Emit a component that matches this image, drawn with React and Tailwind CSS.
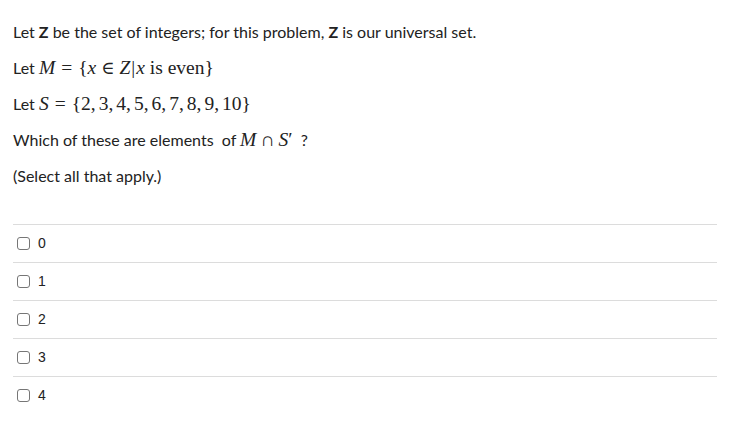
import React from "react";

const SERIF = '"Liberation Serif", "Times New Roman", serif';
const V = ({ children }) => <span className="italic">{children}</span>;
const Op = ({ children }) => <span className="mx-[6px]">{children}</span>;
const Bin = ({ children }) => <span className="mx-[4px]">{children}</span>;

const Math = ({ children }) => (
  <span className="text-[19.5px]" style={{ fontFamily: SERIF }}>{children}</span>
);

export default function App() {
  const opts = ["0", "1", "2", "3", "4"];
  const nums = ["2", "3", "4", "5", "6", "7", "8", "9", "10"];
  return (
    <div className="w-[731px] h-[428px] bg-white pl-[13px] pr-[14px] pt-[20px]" style={{ fontFamily: 'Lato, "Liberation Sans", sans-serif' }}>
      <div className="text-[16px] text-[#222]">
        <p className="h-[24px] leading-[24px]">Let <b>Z</b> be the set of integers; for this problem, <b>Z</b> is our universal set.</p>
        <p className="h-[24px] leading-[24px] mt-[12px]">
          Let{" "}
          <Math>
            <V>M</V><Op>=</Op>{"{"}<V>x</V><span className="mx-[5px] text-[18px]" style={{ fontFamily: '"DejaVu Serif", serif' }}>∈</span><V>Z</V><span className="mx-[1px]">|</span><V>x</V> is even{"}"}
          </Math>
        </p>
        <p className="h-[24px] leading-[24px] mt-[12px]">
          Let{" "}
          <Math>
            <V>S</V><Op>=</Op>{"{"}
            {nums.map((n, i) => (
              <span key={n}>{n}{i < nums.length - 1 ? <span className="mr-[3px]">,</span> : null}</span>
            ))}
            {"}"}
          </Math>
        </p>
        <p className="h-[24px] leading-[24px] mt-[12px]">
          Which of these are elements&nbsp; of{" "}
          <Math>
            <V>M</V><Bin>∩</Bin><V>S</V>′
          </Math>
          &nbsp;&nbsp;?
        </p>
        <p className="h-[24px] leading-[24px] mt-[12px]">(Select all that apply.)</p>
      </div>
      <div className="mt-[36px] w-[704px]">
        {opts.map((o) => (
          <div key={o} className="border-t border-[#dcdcdc] h-[38px] flex items-center pl-[4px]">
            <span className="w-[13px] h-[13px] border border-[#767676] rounded-[3px] bg-white"></span>
            <span className="ml-[8px] text-[14px] text-[#222]" style={{ fontFamily: '"Liberation Sans", Arial, sans-serif' }}>{o}</span>
          </div>
        ))}
      </div>
    </div>
  );
}
